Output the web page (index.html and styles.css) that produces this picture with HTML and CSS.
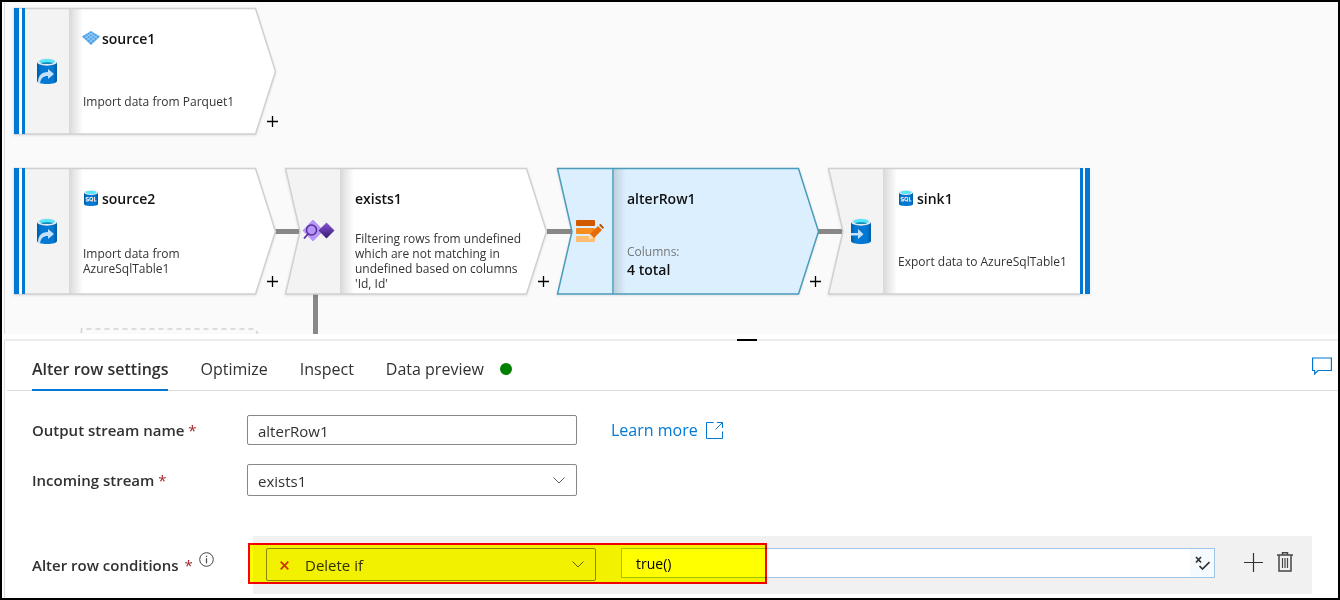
FILE: index.html
```html
<!DOCTYPE html>
<html lang="en">
<head>
	<meta charset="utf-8">
	<title>Data flow</title>
	<link rel="stylesheet" href="styles.css">
</head>
<body>
	<svg class="defs" aria-hidden="true">
		<defs>
			<linearGradient id="shade" x1="0" x2="1" y1="0" y2="0">
				<stop offset="0" stop-color="#000" stop-opacity=".13"/>
				<stop offset="1" stop-color="#000" stop-opacity="0"/>
			</linearGradient>
			<linearGradient id="can" x1="0" x2="1" y1="0" y2="0">
				<stop offset="0" stop-color="#005ba1"/>
				<stop offset=".2" stop-color="#0078d4"/>
				<stop offset=".8" stop-color="#0078d4"/>
				<stop offset="1" stop-color="#005ba1"/>
			</linearGradient>
			<linearGradient id="violet" x1="0" x2="0" y1="0" y2="1">
				<stop offset="0" stop-color="#8a55d8"/>
				<stop offset="1" stop-color="#341a6e"/>
			</linearGradient>
			<symbol id="barrel" viewBox="0 0 20 26">
				<path fill="url(#can)" d="M0 4v19c0 1.700 4.500 3 10 3s10-1.300 10-3V4z"/>
				<ellipse cx="10" cy="4" rx="10" ry="3.700" fill="#e8e8e8"/>
				<ellipse cx="10" cy="3.600" rx="7.800" ry="2.500" fill="#50e6ff"/>
				<path fill="#198ab3" d="M4 5.200c1.500-.7 3.700-1 6-1s4.500.3 6 1c-1.500.6-3.700.9-6 .9s-4.500-.3-6-.9z"/>
			</symbol>
			<symbol id="sql" viewBox="0 0 14 16">
				<path fill="url(#can)" d="M0 2.500V14c0 1.200 3 2 7 2s7-.8 7-2V2.500z"/>
				<ellipse cx="7" cy="2.500" rx="7" ry="2.500" fill="#e8e8e8"/>
				<ellipse cx="7" cy="2.300" rx="5.500" ry="1.600" fill="#50e6ff"/>
				<g fill="none" stroke="#e6e6e6" stroke-width="1.100">
					<path d="M4.600 7.500H3q-1 0-1 .8t1 .9h.6q1 0 1 .9t-1 .8H1.800"/>
					<ellipse cx="7.200" cy="9.100" rx="1.500" ry="1.800"/>
					<path d="M7.500 10l1.300 1.500M10.500 7v4h2"/>
				</g>
			</symbol>
			<symbol id="source-icon" viewBox="0 0 20 26">
				<use href="#barrel" width="20" height="26"/>
				<path fill="#c3e1fa" d="M1 25c0-7 3-11 10-11v-3l6 5-6 5v-3c-5 0-7 2-8 7.500z"/>
			</symbol>
			<symbol id="sink-icon" viewBox="0 0 20 26">
				<use href="#barrel" width="20" height="26"/>
				<path fill="#c3e1fa" d="M0 15h7v-4l5.500 5.200L7 21v-3.500H0z"/>
			</symbol>
			<symbol id="plus" viewBox="0 0 11 11">
				<path fill="none" stroke="currentColor" stroke-width="1.300" d="M5.500 0v11M0 5.500h11"/>
			</symbol>
			<symbol id="chevron" viewBox="0 0 12 7">
				<path fill="none" stroke="currentColor" d="M.5.500L6 6 11.500.500"/>
			</symbol>
		</defs>
	</svg>

	<main class="studio">
		<section class="canvas" aria-label="Data flow graph">
			<svg class="wires" aria-hidden="true">
				<path class="wire" d="M270 229.500h26M542 229.500h26M813 229.500h26M310.500 292v60"/>
				<path class="ghost" d="M76.500 340v-13h174l6 14"/>
			</svg>

			<article class="node source" id="source1">
				<svg class="shape" viewBox="0 0 263 127" aria-hidden="true">
					<path class="face" d="M.5.500h241l20 63-20 62.500H.5z"/>
					<path class="grip" d="M11 1h45v124.500H11z"/>
					<path class="edge" d="M56 1v125"/>
					<path fill="url(#shade)" d="M57 1h12v124.500H57z"/>
					<path class="outline" d="M.5.500h241l20 63-20 62.500H.5z"/>
					<path fill="#fff" d="M5 1h3v125H5z"/>
					<path class="bar" d="M0 0h5v126H0zM8 0h3v126H8z"/>
				</svg>
				<svg class="kind" width="20" height="26" aria-hidden="true"><use href="#source-icon"/></svg>
				<div class="body">
					<h3>
						<svg width="18" height="14" viewBox="0 0 18 14" aria-hidden="true">
							<path fill="#4fa3e8" d="M9 0l9 5.500L9 14 0 5.500z"/>
							<path fill="none" stroke="#b4dafa" stroke-width=".7" d="M6.800 1.400l8.500 6M4.700 2.800l8.500 6.600M2.600 4.200l8.500 7.500M11.200 1.400l-8.500 6M13.300 2.800L4.800 9.400M15.400 4.200l-8.500 7.500"/>
						</svg>
						source1
					</h3>
					<p>Import data from Parquet1</p>
				</div>
				<button class="add" aria-label="Add step"><svg width="11" height="11"><use href="#plus"/></svg></button>
			</article>

			<article class="node source" id="source2">
				<svg class="shape" viewBox="0 0 263 127" aria-hidden="true">
					<path class="face" d="M.5.500h241l20 63-20 62.500H.5z"/>
					<path class="grip" d="M11 1h45v124.500H11z"/>
					<path class="edge" d="M56 1v125"/>
					<path fill="url(#shade)" d="M57 1h12v124.500H57z"/>
					<path class="outline" d="M.5.500h241l20 63-20 62.500H.5z"/>
					<path fill="#fff" d="M5 1h3v125H5z"/>
					<path class="bar" d="M0 0h5v126H0zM8 0h3v126H8z"/>
				</svg>
				<svg class="kind" width="20" height="26" aria-hidden="true"><use href="#source-icon"/></svg>
				<div class="body">
					<h3>
						<svg width="18" height="16" aria-hidden="true"><use href="#sql"/></svg>
						source2
					</h3>
					<p>Import data from AzureSqlTable1</p>
				</div>
				<button class="add" aria-label="Add step"><svg width="11" height="11"><use href="#plus"/></svg></button>
			</article>

			<article class="node" id="exists1">
				<svg class="shape" viewBox="0 0 263 127" aria-hidden="true">
					<path class="face" d="M.5.500h241l20 63-20 62.500H.5l14.500-62.500z"/>
					<path class="grip" d="M.5.500H56V126H.5l14.500-62.500z"/>
					<path class="edge" d="M56 1v125"/>
					<path fill="url(#shade)" d="M57 1h12v124.500H57z"/>
					<path class="outline" d="M.5.500h241l20 63-20 62.500H.5l14.500-62.500z"/>
				</svg>
				<svg class="kind" width="33" height="23" viewBox="0 0 33 23" aria-hidden="true">
					<path fill="#b796f9" stroke="#b796f9" stroke-linejoin="round" d="M11 1l10 10.500L11 22 1 11.500z"/>
					<path fill="url(#violet)" d="M24.500 3.500l8 8-8 8-8-8z"/>
					<circle cx="9.500" cy="11" r="5" fill="none" stroke="#552f99" stroke-width="1.500"/>
					<path stroke="#552f99" stroke-width="1.800" d="M6 15l-4 4.500"/>
				</svg>
				<div class="body">
					<h3>exists1</h3>
					<p>Filtering rows from undefined which are not matching in undefined based on columns 'Id, Id'</p>
				</div>
				<button class="add" aria-label="Add step"><svg width="11" height="11"><use href="#plus"/></svg></button>
			</article>

			<article class="node selected" id="alterRow1">
				<svg class="shape" viewBox="0 0 263 127" aria-hidden="true">
					<path class="face" d="M.5.500h241l20 63-20 62.500H.5l14.500-62.500z"/>
					<path class="edge" d="M56 1v125"/>
					<path fill="url(#shade)" d="M57 1h12v124.500H57z"/>
					<path class="outline" d="M.5.500h241l20 63-20 62.500H.5l14.500-62.500z"/>
				</svg>
				<svg class="kind" width="28" height="23" viewBox="0 0 28 23" aria-hidden="true">
					<rect y="1" width="19" height="6" rx="1" fill="#d15900"/>
					<rect y="9" width="19" height="6" rx="1" fill="#f78d1e"/>
					<rect y="17" width="19" height="6" rx="1" fill="#ffbd70"/>
					<path fill="#ffdfb8" d="M12.500 20.500l1.500-5.500 4 4z"/>
					<path fill="#e66a08" d="M14 15l8-8 4 4-8 8z"/>
					<path fill="#b84c00" d="M23 6l1.500-1.300L28 8.500 26.800 10z"/>
				</svg>
				<div class="body">
					<h3>alterRow1</h3>
					<p><span>Columns:</span><b>4 total</b></p>
				</div>
				<button class="add" aria-label="Add step"><svg width="11" height="11"><use href="#plus"/></svg></button>
			</article>

			<article class="node" id="sink1">
				<svg class="shape" viewBox="0 0 263 127" aria-hidden="true">
					<path class="face" d="M.5.500h262V126H.5l14.500-62.500z"/>
					<path class="grip" d="M.5.500H56V126H.5l14.500-62.500z"/>
					<path class="edge" d="M56 1v125"/>
					<path fill="url(#shade)" d="M57 1h12v124.500H57z"/>
					<path class="outline" d="M252 .5H.5l14.500 63L.5 126H252"/>
					<path class="bar" d="M252 0h3v126h-3zM257 0h5v126h-5z"/>
				</svg>
				<svg class="kind" width="20" height="26" aria-hidden="true"><use href="#sink-icon"/></svg>
				<div class="body">
					<h3>
						<svg width="18" height="16" aria-hidden="true"><use href="#sql"/></svg>
						sink1
					</h3>
					<p>Export data to AzureSqlTable1</p>
				</div>
			</article>
		</section>

		<div class="splitter"><span></span></div>

		<section class="panel">
			<nav class="tabs">
				<button class="tab active">Alter row settings</button>
				<button class="tab">Optimize</button>
				<button class="tab">Inspect</button>
				<button class="tab">Data preview <i class="dot"></i></button>
				<button class="feedback" aria-label="Feedback">
					<svg width="20" height="18" viewBox="0 0 20 18">
						<path fill="none" stroke="#0078d4" stroke-width="1.200" d="M.6 1h18.800v12.500H6L2.700 17v-3.500H.6z"/>
					</svg>
				</button>
			</nav>

			<form class="settings">
				<label for="output">Output stream name <em>*</em></label>
				<div class="field">
					<input id="output" class="box" type="text" value="alterRow1">
					<a class="learn" href="#">Learn more
						<svg width="17" height="17" viewBox="0 0 17 17" aria-hidden="true">
							<path fill="none" stroke="currentColor" d="M7.500.5h-7v16h16v-7M9.500 7.500l7-7M11 .5h5.500V6"/>
						</svg>
					</a>
				</div>

				<label for="incoming">Incoming stream <em>*</em></label>
				<div class="field">
					<div class="drop">
						<select id="incoming" class="box"><option>exists1</option></select>
						<svg class="chevron" width="12" height="7" aria-hidden="true"><use href="#chevron"/></svg>
					</div>
				</div>

				<label for="condition" class="cond-label">Alter row conditions <em>*</em>
					<svg class="info" width="15" height="15" viewBox="0 0 15 15" aria-hidden="true">
						<circle cx="7.500" cy="7.500" r="6.800" fill="none" stroke="#484644"/>
						<path stroke="#484644" stroke-width="1.200" d="M7.500 6.200v5M7.500 3.800V5"/>
					</svg>
				</label>
				<div class="conditions">
					<div class="drop">
						<svg class="remove" width="9" height="9" viewBox="0 0 9 9" aria-hidden="true">
							<path stroke="#d13438" stroke-width="1.800" d="M.7.700l7.600 7.600M8.300.700L.7 8.300"/>
						</svg>
						<select id="condition" class="box"><option>Delete if</option></select>
						<svg class="chevron" width="12" height="7" aria-hidden="true"><use href="#chevron"/></svg>
					</div>
					<div class="expression">
						<input type="text" value="true()" aria-label="Expression">
						<button type="button" aria-label="Open expression builder">
							<svg width="15" height="14" viewBox="0 0 15 14">
								<path fill="none" stroke="#323130" stroke-width="1.700" d="M1 1l5 5.500M6 1L1 6.500M4.500 10l3 3 7-7"/>
							</svg>
						</button>
					</div>
					<button type="button" class="icon" aria-label="Add condition">
						<svg width="19" height="19" viewBox="0 0 19 19"><path stroke="#323130" stroke-width="1.200" d="M9.500 0v19M0 9.500h19"/></svg>
					</button>
					<button type="button" class="icon" aria-label="Delete condition">
						<svg width="16" height="20" viewBox="0 0 16 20">
							<path fill="none" stroke="#484644" stroke-width="1.500" d="M0 3h16M5.500 3V.8h5V3M2 3v16h12V3"/>
							<path stroke="#484644" stroke-width="1.200" d="M5.500 6v10M8 6v10M10.500 6v10"/>
						</svg>
					</button>
					<div class="marker"></div>
				</div>
			</form>
		</section>
	</main>
</body>
</html>
```

FILE: styles.css
```css
*{box-sizing:border-box;}
body{
	margin:0;
	font-family:"Open Sans", "Noto Sans", sans-serif;
	color:#323130;
	background:#fff;
}
h3,p{margin:0;}
button{
	padding:0;
	border:0;
	background:none;
	font:inherit;
	color:inherit;
	cursor:pointer;
}
svg{flex:none;}
.defs{
	position:absolute;
	width:0;
	height:0;
}

.studio{
	display:flex;
	flex-direction:column;
	min-height:100vh;
	border:2px solid #000;
	padding-left:2px;
}

/* graph */
.canvas{
	position:relative;
	height:332px;
	border-left:1px solid #dcdcdc;
	background:#fafafa;
	overflow:hidden;
}
.wires{
	position:absolute;
	top:0;
	left:0;
	width:100%;
	height:100%;
}
.wire{
	fill:none;
	stroke:#8a8886;
	stroke-width:5;
}
.ghost{
	fill:none;
	stroke:#d2d2d2;
	stroke-width:1.500;
	stroke-dasharray:5 4;
}
.node{
	position:absolute;
	display:flex;
	align-items:center;
	width:263px;
	height:127px;
}
#source1{left:9px;top:6px;}
#source2{left:9px;top:166px;}
#exists1{left:280px;top:166px;}
#alterRow1{left:552px;top:166px;}
#sink1{left:823px;top:166px;}
.shape{
	position:absolute;
	top:0;
	left:0;
	width:100%;
	height:100%;
	overflow:visible;
	filter:drop-shadow(0 1px 1px rgba(0,0,0,.1));
}
.face{fill:#fff;}
.grip{fill:#f3f3f3;}
.edge,.outline{
	fill:none;
	stroke:#d0d0d0;
	stroke-width:1.500;
}
.bar{fill:#0078d4;}
.selected .face{fill:#dceffe;}
.selected .edge,.selected .outline{stroke:#4a9cba;}
.kind{
	position:relative;
	margin:0 0 2px 23px;
}
#exists1 .kind{margin-left:17px;}
#alterRow1 .kind{margin-left:19px;}
.body{
	position:absolute;
	top:0;
	left:70px;
	width:174px;
	height:100%;
	padding-top:20px;
	color:#111;
}
.source .body{left:69px;}
.body h3{
	display:flex;
	align-items:center;
	gap:2px;
	height:20px;
	font-size:14px;
	font-weight:600;
}
.body h3 svg{margin-left:-1px;}
.body p{
	display:flex;
	flex-direction:column;
	justify-content:center;
	height:62px;
	margin-top:22px;
	font-size:12px;
	line-height:15px;
	color:#333;
}
.body span{
	line-height:18px;
	color:#777;
}
.body b{
	font-size:14px;
	font-weight:600;
	line-height:18px;
	color:#111;
}
.add{
	position:absolute;
	left:253px;
	top:108px;
	width:11px;
	height:11px;
	color:#000;
}
.add svg{display:block;}

.splitter{
	display:flex;
	justify-content:center;
	height:2px;
	margin-top:5px;
	background:#ececec;
}
.splitter span{
	width:20px;
	margin-left:152px;
	background:#000;
}

/* settings */
.panel{
	flex:1;
	border-left:1px solid #dcdcdc;
}
.tabs{
	display:flex;
	gap:32px;
	height:50px;
	margin-left:2px;
	padding:0 6px 0 25px;
	border-bottom:1px solid #dcdcdc;
}
.tab{
	display:flex;
	align-items:center;
	height:50px;
	padding-top:8px;
	border-bottom:2px solid transparent;
	font-size:16px;
	white-space:nowrap;
}
.active{
	border-color:#0078d4;
	font-weight:600;
}
.dot{
	width:12px;
	height:12px;
	margin-left:16px;
	border-radius:50%;
	background:#008000;
}
.feedback{
	margin-left:auto;
}
.feedback svg{display:block;}
.settings{
	display:grid;
	grid-template-columns:215px 1fr;
	align-items:center;
	padding:24px 26px 4px 27px;
	font-size:15px;
}
.settings label{
	margin-bottom:19px;
	font-weight:600;
	white-space:nowrap;
}
.settings em{
	font-style:normal;
	font-weight:400;
	color:#a4262c;
}
.field{
	display:flex;
	align-items:center;
	gap:34px;
	margin-bottom:19px;
}
.box{
	display:block;
	width:330px;
	height:30px;
	padding:2px 10px 0;
	border:1px solid #8a8886;
	border-radius:2px;
	background:#fff;
	font:inherit;
	color:#323130;
	appearance:none;
}
.drop{
	position:relative;
}
.drop .box{height:32px;}
.chevron{
	position:absolute;
	right:12px;
	top:13px;
	color:#605e5c;
	pointer-events:none;
}
.learn{
	display:flex;
	align-items:center;
	gap:8px;
	font-size:16px;
	color:#0078d4;
	text-decoration:none;
}
.settings .cond-label{
	display:flex;
	align-items:center;
	gap:6px;
	margin:21px 0 0;
}
.info{
	margin-bottom:12px;
}
.conditions{
	position:relative;
	display:flex;
	align-items:flex-start;
	height:58px;
	margin:21px 0 0 6px;
	padding:12px 19px 0 13px;
	background:#f1f1f1;
}
.conditions .box{
	height:33px;
	padding:0 10px 0 38px;
	background:transparent;
}
.remove{
	position:absolute;
	left:14px;
	top:13px;
}
.expression{
	display:flex;
	flex:1;
	height:30px;
	margin:0 29px 0 25px;
	border:1px solid #9fc5e8;
	background:#fff;
}
.expression input{
	flex:1;
	min-width:0;
	padding:0 14px;
	border:0;
	background:none;
	font:inherit;
	font-size:14px;
	color:#000;
}
.expression button{
	width:24px;
	background:#f5faff;
}
.expression svg{
	display:block;
	margin:auto;
}
.icon{
	height:28px;
}
.icon svg{display:block;}
.icon + .icon{margin-left:14px;}
.marker{
	position:absolute;
	left:-5px;
	top:7px;
	width:519px;
	height:41px;
	border:2px solid #f00;
	background:#ff0;
	mix-blend-mode:multiply;
	pointer-events:none;
}
```
